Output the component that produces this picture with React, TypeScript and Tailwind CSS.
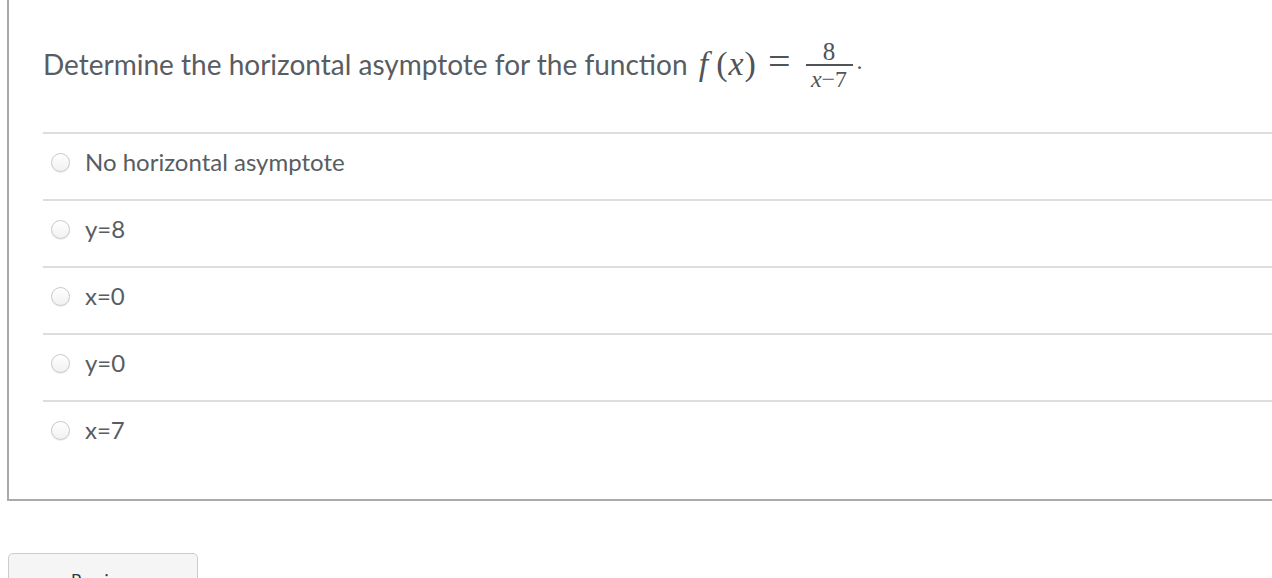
const options = ['No horizontal asymptote', 'y=8', 'x=0', 'y=0', 'x=7'];

function Radio() {
  return (
    <span className="w-[19px] h-[19px] rounded-full border border-[#c9c9c9] bg-gradient-to-b from-white to-[#f1f1f1] shadow-[0_1px_1px_rgba(0,0,0,0.08)] flex-shrink-0" />
  );
}

function MathExpr() {
  // f(x) = 8 / (x - 7), drawn roughly the way the math renderer lays it out
  return (
    <span className="font-['Liberation_Serif',serif] text-[#4f5459] leading-none">
      <span className="italic text-[34px] ml-[4px] mr-[8px]">f</span>
      <span className="text-[34px]">(</span>
      <span className="italic text-[34px] ml-[1px]">x</span>
      <span className="text-[34px] ml-[1px]">)</span>
      <span className="text-[40px] ml-[12px] mr-[14px]">=</span>
      <span className="inline-flex flex-col items-center align-[15px] px-[1px]">
        <span className="text-[25px] leading-none">8</span>
        <span className="block w-[47px] h-[1.5px] bg-[#4f5459] mb-[1px]" />
        <span className="text-[24px] leading-none">
          <span className="italic">x</span>−7
        </span>
      </span>
      <span className="text-[24px] ml-[3px] align-[6px]">.</span>
    </span>
  );
}

export default function App() {
  return (
    <div className="w-[1272px] h-[578px] overflow-hidden bg-white font-['Lato','Liberation_Sans',sans-serif] text-[#585d62]">
      <div className="ml-[7px] w-[1320px] border-l-2 border-b-2 border-[#aaaaaa] pl-[34px] pb-[32px]">
        <div className="h-[132px] pt-[39px]">
          <p className="text-[28px] leading-[32px] whitespace-nowrap">
            Determine the horizontal asymptote for the function{' '}
            <MathExpr />
          </p>
        </div>
        {options.map((opt) => (
          <div key={opt} className="border-t-2 border-[#dddddd] h-[67px] pt-[15px]">
            <label className="flex items-center gap-[15px] pl-[8px] text-[24px] leading-[26px]">
              <Radio />
              <span>{opt}</span>
            </label>
          </div>
        ))}
      </div>
      <div className="mt-[52px] ml-[8px]">
        <button className="w-[190px] h-[40px] rounded-[5px] border border-[#c7cdd1] bg-[#f5f5f5] text-[#2d3b45] text-[17px] pt-[16px] leading-[20px]">
          Previous
        </button>
      </div>
    </div>
  );
}
